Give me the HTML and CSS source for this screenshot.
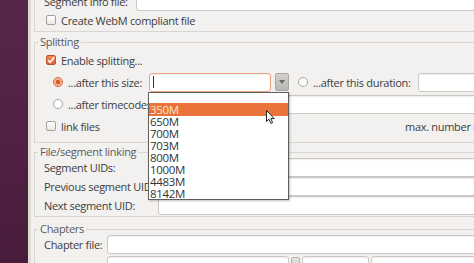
FILE: index.html
```html
<!DOCTYPE html>
<html lang="en">
<head>
    <meta charset="UTF-8">
    <title>Output options</title>
    <link rel="stylesheet" href="styles.css">
</head>
<body>
    <div class="desktop"></div>
    <div class="window">
        <div class="content">
            <!-- General options (top cut off) -->
            <div class="group group-top">
                <div class="row">
                    <span class="label" style="width: 92px">Segment info file:</span>
                    <span class="entry grow"></span>
                </div>
                <div class="row short">
                    <span class="check"></span>
                    <span>Create WebM compliant file</span>
                </div>
            </div>

            <fieldset class="group group-split">
                <legend>Splitting</legend>
                <div class="rows">
                    <div class="row">
                        <span class="check checked">
                            <svg viewBox="0 0 10 10" width="10" height="10"><path d="M2 5.2 L4.2 7.4 L8.2 2.2" fill="none" stroke="#fff" stroke-width="1.6"/></svg>
                        </span>
                        <span>Enable splitting...</span>
                    </div>
                    <div class="row indent">
                        <span class="radio on">
                            <svg viewBox="0 0 10 10" width="10" height="10"><circle cx="5" cy="5" r="4.5" fill="#f3b493" stroke="#d8693c"/><circle cx="5" cy="5" r="2.2" fill="#d65a24"/></svg>
                        </span>
                        <span class="label size-label">...after this size:</span>
                        <span class="entry focus combo-entry"><span class="caret"></span></span>
                        <span class="combo-btn"><svg viewBox="0 0 6 4" width="6" height="4"><path d="M0 0 H6 L3 4 Z" fill="#6a6865"/></svg></span>
                        <span class="radio off second">
                            <svg viewBox="0 0 10 10" width="10" height="10"><circle cx="5" cy="5" r="4.5" fill="#fff" stroke="#a8a5a1"/></svg>
                        </span>
                        <span class="label duration-label">...after this duration:</span>
                        <span class="entry grow"></span>
                    </div>
                    <div class="row indent">
                        <span class="radio off">
                            <svg viewBox="0 0 10 10" width="10" height="10"><circle cx="5" cy="5" r="4.5" fill="#fff" stroke="#a8a5a1"/></svg>
                        </span>
                        <span class="label size-label">...after timecodes:</span>
                        <span class="entry grow"></span>
                    </div>
                    <div class="row">
                        <span class="check"></span>
                        <span class="label link-label">link files</span>
                        <span class="label">max. number of files:</span>
                    </div>
                </div>
            </fieldset>

            <fieldset class="group group-link">
                <legend>File/segment linking</legend>
                <div class="row tight">
                    <span class="label uid-label">Segment UIDs:</span>
                    <span class="entry grow"></span>
                </div>
                <div class="row tight">
                    <span class="label uid-label">Previous segment UID:</span>
                    <span class="entry grow"></span>
                </div>
                <div class="row tight">
                    <span class="label uid-label">Next segment UID:</span>
                    <span class="entry grow"></span>
                </div>
            </fieldset>

            <fieldset class="group group-chapters">
                <legend>Chapters</legend>
                <div class="row tight">
                    <span class="label chapter-label">Chapter file:</span>
                    <span class="entry grow"></span>
                </div>
                <div class="row tight low">
                    <span class="label chapter-label"></span>
                    <span class="entry lang-entry"></span>
                    <span class="mini-btn"></span>
                    <span class="entry mini-entry"></span>
                    <span class="entry grow"></span>
                </div>
            </fieldset>
        </div>
    </div>

    <!-- Open combo popup -->
    <div class="popup">
        <div class="item blank"></div>
        <div class="item hot">350M</div>
        <div class="item">650M</div>
        <div class="item">700M</div>
        <div class="item">703M</div>
        <div class="item">800M</div>
        <div class="item">1000M</div>
        <div class="item">4483M</div>
        <div class="item">8142M</div>
    </div>

    <svg class="pointer" viewBox="0 0 10 15" width="10" height="15">
        <path d="M0.5 0.5 L0.5 11.5 L3 9.2 L4.8 13.4 L6.6 12.6 L4.9 8.6 L8.3 8.6 Z" fill="#fff" stroke="#222" stroke-width="1" stroke-linejoin="round"/>
    </svg>
</body>
</html>
```

FILE: styles.css
```css
body {
    margin: 0;
    width: 474px;
    height: 263px;
    overflow: hidden;
    position: relative;
    display: flex;
    font-family: "Open Sans", sans-serif;
    font-size: 11px;
    letter-spacing: -0.3px;
    color: #3c3c3c;
    background: #f2f1f0;
}
.desktop {
    width: 28px;
    flex: none;
    background: linear-gradient(#57274a, #4a1c3b);
}
.window {
    flex: 1;
    display: flex;
    border-left: 3px solid #dedbd7;
    background: #f2f1f0;
    overflow: hidden;
}
.content {
    flex: none;
    width: 480px;
    padding-left: 3px;
    display: flex;
    flex-direction: column;
}
.group {
    margin: 0;
    padding: 0 0 0 9px;
    min-width: 0;
    border: 1px solid #d9d6d2;
    border-right: none;
}
.group legend {
    padding: 0 2px;
    margin-left: -6px;
    line-height: 12px;
    color: #5a5a5a;
}
.group-top {
    margin-top: -10px;
    padding-bottom: 2px;
}
.group-split {
    margin-top: 4px;
    padding-top: 2px;
    padding-bottom: 6px;
}
.group-link {
    margin-top: 3px;
    padding-bottom: 1px;
}
.group-chapters {
    margin-top: 6px;
}
.rows {
    display: flex;
    flex-direction: column;
    gap: 2px;
}
.row {
    display: flex;
    align-items: center;
    height: 20px;
    white-space: nowrap;
}
.row.short {
    height: 18px;
}
.row.tight {
    height: 19px;
}
.row.low {
    margin-top: 2px;
}
.row.indent {
    padding-left: 9px;
}
.label {
    flex: none;
}
.size-label {
    width: 81px;
}
.duration-label {
    width: 105px;
}
.link-label {
    width: 344px;
}
.uid-label {
    width: 114px;
}
.chapter-label {
    width: 63px;
}
.grow {
    flex: 1;
}
.check {
    flex: none;
    box-sizing: border-box;
    width: 10px;
    height: 10px;
    margin: 0 5px 0 2px;
    border: 1px solid #a4a19c;
    border-radius: 2px;
    background: linear-gradient(#ffffff, #ebe9e6);
    display: flex;
}
.check.checked {
    border-color: #b9542b;
    background: linear-gradient(#ef8a55, #df6533);
}
.check.checked svg {
    margin: -1px;
}
.radio {
    flex: none;
    width: 10px;
    height: 10px;
    margin-right: 5px;
    display: flex;
}
.radio.second {
    margin-left: 9px;
}
.entry {
    box-sizing: border-box;
    height: 19px;
    background: #fff;
    border: 1px solid #cbc7c2;
    border-radius: 3px;
    box-shadow: inset 0 1px 1px rgba(0, 0, 0, 0.07);
    display: flex;
    align-items: center;
}
.entry.focus {
    border-color: #eaa47f;
}
.combo-entry {
    width: 122px;
}
.caret {
    width: 1px;
    height: 12px;
    margin-left: 3px;
    background: #333;
}
.combo-btn {
    flex: none;
    box-sizing: border-box;
    width: 14px;
    height: 18px;
    margin-left: 4px;
    border: 1px solid #a9a6a2;
    border-radius: 2px;
    background: linear-gradient(#d3d1ce, #b8b6b2);
    display: flex;
    align-items: center;
    justify-content: center;
}
.lang-entry {
    width: 182px;
}
.mini-btn {
    flex: none;
    box-sizing: border-box;
    width: 9px;
    height: 17px;
    margin: 0 2px;
    border: 1px solid #b3b0ac;
    border-radius: 2px;
    background: linear-gradient(#e4e2df, #cfccc8);
}
.mini-entry {
    width: 67px;
    margin-right: 2px;
}
.popup {
    position: absolute;
    left: 148px;
    top: 92px;
    width: 141px;
    height: 108px;
    box-sizing: border-box;
    background: #fff;
    border: 1px solid #5e5e5e;
    box-shadow: 1px 1px 2px rgba(0, 0, 0, 0.25);
    font-size: 11.5px;
    color: #333;
}
.item {
    height: 12px;
    line-height: 12px;
    padding-left: 1px;
}
.item.blank {
    height: 10px;
}
.item.hot {
    height: 13px;
    line-height: 14px;
    background: #e9733a;
    color: #fde3d3;
}
.pointer {
    position: absolute;
    left: 266px;
    top: 110px;
}
```
